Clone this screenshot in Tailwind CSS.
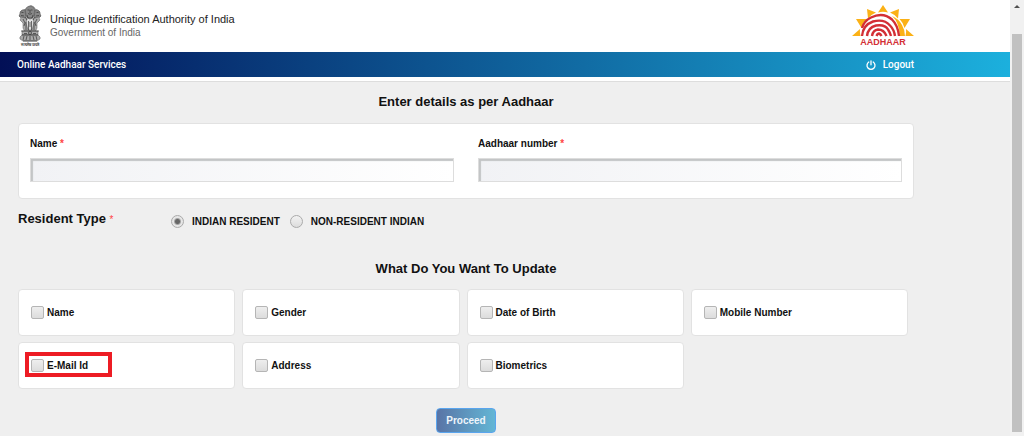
<!DOCTYPE html>
<html lang="en">
<head>
    <meta charset="UTF-8">
    <meta name="viewport" content="width=device-width, initial-scale=1.0">
    <title>Online Aadhaar Services</title>
    <script src="https://cdn.jsdelivr.net/npm/@tailwindcss/browser@4"></script>
</head>
<body class="flex min-h-screen bg-[#efefef] font-['Liberation_Sans',Arial,sans-serif] text-[#111]">
    <div class="flex-1">
        <!-- Header -->
        <header class="flex h-[52px] items-start justify-between bg-white pl-[18px] pr-24">
            <div class="flex gap-2">
                <svg class="mt-1 h-[43px] w-6" viewBox="0 0 24 43" role="img" aria-label="State Emblem of India">
                    <g stroke="#555" stroke-width=".5">
                        <path fill="#aaa" d="M4 6 2 8v3l-1 1 2 2-1 2 3 3v5l2 4h10l2-4v-5l3-3-1-2 2-2-1-1V8l-2-2-3-1-1-2-3-1.500-3 1.500-1 2z"/>
                        <path fill="#888" d="M8 4q4-4 8 0l1 4-1 4-2 2h-4l-2-2-1-4zM3 7l4-1 1 4-1 4-4-1-2-1 1-2zM21 7l-4-1-1 4 1 4 4-1 2-1-1-2z"/>
                        <path fill="#ddd" d="M9 14h6l1 5-2 7h-4l-2-7z"/>
                        <path fill="#aaa" d="M4 27h16v4H4z"/>
                        <path fill="#aaa" d="M4 31h16q3 2 2 4l-3 2H5l-3-2q-1-2 2-4z"/>
                    </g>
                    <g fill="none" stroke="#333" stroke-width=".7">
                        <path d="M9.500 6h2M12.500 6h2M10 9.500q2 1.500 4 0M12 6v3M3.500 8.500h2M18.500 8.500h2M3 11.500l3 .5M21 11.500l-3 .5"/>
                        <path d="M7 13l2 3M17 13l-2 3M9 11l1 3 2 1 2-1 1-3M5 15l2 4-1 3M19 15l-2 4 1 3M8 18v8M16 18v8M10.500 17v9M13.500 17v9M12 18v5"/>
                        <path d="M3 27h18M4 31h16M5 37h14"/>
                        <circle cx="12" cy="29" r="1.500"/>
                        <path d="M6 29.500h3M15 29.500h3M6 32l-1 4M9 32l-1 4M12 32v4M15 32l1 4M18 32l1 4"/>
                    </g>
                    <text x="12" y="42" text-anchor="middle" font-size="4" font-weight="bold" fill="#333">सत्यमेव जयते</text>
                </svg>
                <div class="mt-3">
                    <p class="text-[11px] leading-[14px] text-[#222]">Unique Identification Authority of India</p>
                    <p class="text-[10px] leading-[13px] text-[#666]">Government of India</p>
                </div>
            </div>
            <svg class="mt-1 h-[43px] w-[62px]" viewBox="0 0 62 43" role="img" aria-label="Aadhaar">
                <!-- sun rays -->
                <g fill="#fbb116">
                    <path d="M31 1l5 7.500q-5-1.500-10 0z"/>
                    <path d="M15 5l9 3.500q-5 2-8 6z"/>
                    <path d="M47 5l-9 3.500q5 2 8 6z"/>
                    <path d="M4 15l10.500 0q-4 4-5 9z"/>
                    <path d="M58 15l-10.500 0q4 4 5 9z"/>
                    <path d="M0 32l8-7q-.5 3 .5 7z"/>
                    <path d="M62 32l-8-7q.5 3-.5 7z"/>
                    <path d="M48 32h5q0-6-3-11-3-6-10-9 7 6 8 20z"/>
                </g>
                <!-- fingerprint -->
                <g fill="none" stroke="#d32f36" stroke-width="2.400">
                    <path d="M10 24q2-7 9-10.500 12-6 21 2 6 6 7 16.500"/>
                    <path d="M10 32q1-11 11-14.500 11-3 17 4 4 4 5 10.500"/>
                    <path d="M15 32q1-8.500 9-10.500 9-1.500 12 4 2 3 3 6.500"/>
                    <path d="M20 32q1-6 6-6.500 6 0 8.500 6.500"/>
                    <path d="M24.500 32q1-2.500 2.500-2.500 1.500 .5 2.500 2.500"/>
                </g>
                <text x="31" y="41" text-anchor="middle" font-size="9" font-weight="bold" fill="#d32f36">AADHAAR</text>
            </svg>
        </header>

        <nav class="flex h-[25px] items-center justify-between bg-linear-to-r/srgb from-[#020f56] to-[#1cb0dd] pl-[17px] pr-24 font-[Roboto,sans-serif] text-[10px] font-medium text-white">
            <a href="#">Online Aadhaar Services</a>
            <a href="#" class="flex items-center gap-[7px]">
                <svg class="size-[10px]" viewBox="0 0 10 10" fill="none" stroke="#fff" stroke-width="1.300" stroke-linecap="round">
                    <path d="M5 .8v4M2.800 2a4 4 0 1 0 4.400 0"/>
                </svg>
                Logout
            </a>
        </nav>
        <div class="h-[5px] border-b border-[#ddd] bg-white"></div>

        <main class="pl-[18px] pr-24 pt-[10px]">
            <form>
                <h2 class="text-center text-[13px] leading-5 font-bold">Enter details as per Aadhaar</h2>
                <div class="mt-[11px] grid grid-cols-2 gap-6 rounded border border-[#e2e2e2] bg-white px-[11px] pt-3 pb-4 text-[10px] font-bold">
                    <div>
                        <label for="name" class="block leading-4">Name <span class="text-[#f44]">*</span></label>
                        <input id="name" type="text" class="mt-[6px] block h-6 w-full border border-[#ddd] bg-linear-to-r from-[#f1f2f5] to-white px-2 shadow-[inset_2px_2px_1px_#c3c5c6] outline-none">
                    </div>
                    <div>
                        <label for="aadhaar" class="block leading-4">Aadhaar number <span class="text-[#f44]">*</span></label>
                        <input id="aadhaar" type="text" class="mt-[6px] block h-6 w-full border border-[#ddd] bg-linear-to-r from-[#f1f2f5] to-white px-2 shadow-[inset_2px_2px_1px_#c3c5c6] outline-none">
                    </div>
                </div>

                <fieldset class="mt-[10px] flex items-start text-[10px] font-bold">
                    <legend class="float-left w-[153px] text-[13px] leading-5">Resident Type <span class="text-[10px] font-normal text-[#f44]">*</span></legend>
                    <label class="mt-[5px] flex items-center gap-2">
                        <input type="radio" name="resident" checked class="size-[13px] appearance-none rounded-full border border-[#aaa] bg-linear-to-b from-[#f2f2f2] to-[#dcdcdc] checked:bg-[radial-gradient(circle,#666_2px,#e6e6e6_4px)]">
                        INDIAN RESIDENT
                    </label>
                    <label class="mt-[5px] ml-[10px] flex items-center gap-2">
                        <input type="radio" name="resident" class="size-[13px] appearance-none rounded-full border border-[#aaa] bg-linear-to-b from-[#f2f2f2] to-[#dcdcdc] checked:bg-[radial-gradient(circle,#666_2px,#e6e6e6_4px)]">
                        NON-RESIDENT INDIAN
                    </label>
                </fieldset>

                <h2 class="mt-[29px] text-center text-[13px] leading-5 font-bold">What Do You Want To Update</h2>
                <div class="mt-[10px] mr-[6px] grid grid-cols-4 gap-x-[7px] gap-y-[6px] text-[10px] font-bold">
                    <div class="flex h-[47px] items-center rounded border border-[#e2e2e2] bg-white px-3">
                        <label class="flex items-center gap-[3px]"><input type="checkbox" class="size-[13px] appearance-none rounded-xs border border-[#b5b5b5] bg-linear-to-b from-[#eee] to-[#dcdcdc] checked:bg-[#555]">Name</label>
                    </div>
                    <div class="flex h-[47px] items-center rounded border border-[#e2e2e2] bg-white px-3">
                        <label class="flex items-center gap-[3px]"><input type="checkbox" class="size-[13px] appearance-none rounded-xs border border-[#b5b5b5] bg-linear-to-b from-[#eee] to-[#dcdcdc] checked:bg-[#555]">Gender</label>
                    </div>
                    <div class="flex h-[47px] items-center rounded border border-[#e2e2e2] bg-white px-3">
                        <label class="flex items-center gap-[3px]"><input type="checkbox" class="size-[13px] appearance-none rounded-xs border border-[#b5b5b5] bg-linear-to-b from-[#eee] to-[#dcdcdc] checked:bg-[#555]">Date of Birth</label>
                    </div>
                    <div class="flex h-[47px] items-center rounded border border-[#e2e2e2] bg-white px-3">
                        <label class="flex items-center gap-[3px]"><input type="checkbox" class="size-[13px] appearance-none rounded-xs border border-[#b5b5b5] bg-linear-to-b from-[#eee] to-[#dcdcdc] checked:bg-[#555]">Mobile Number</label>
                    </div>
                    <div class="relative flex h-[47px] items-center rounded border border-[#e2e2e2] bg-white px-3">
                        <label class="flex items-center gap-[3px]"><input type="checkbox" class="size-[13px] appearance-none rounded-xs border border-[#b5b5b5] bg-linear-to-b from-[#eee] to-[#dcdcdc] checked:bg-[#555]">E-Mail Id</label>
                        <!-- highlight -->
                        <div class="pointer-events-none absolute top-[9px] left-[6px] h-[25px] w-[87px] border-4 border-[#ed1c24]"></div>
                    </div>
                    <div class="flex h-[47px] items-center rounded border border-[#e2e2e2] bg-white px-3">
                        <label class="flex items-center gap-[3px]"><input type="checkbox" class="size-[13px] appearance-none rounded-xs border border-[#b5b5b5] bg-linear-to-b from-[#eee] to-[#dcdcdc] checked:bg-[#555]">Address</label>
                    </div>
                    <div class="flex h-[47px] items-center rounded border border-[#e2e2e2] bg-white px-3">
                        <label class="flex items-center gap-[3px]"><input type="checkbox" class="size-[13px] appearance-none rounded-xs border border-[#b5b5b5] bg-linear-to-b from-[#eee] to-[#dcdcdc] checked:bg-[#555]">Biometrics</label>
                    </div>
                </div>

                <div class="mt-[19px] flex justify-center">
                    <button type="button" class="h-[25px] rounded border border-[#5aa5ee] bg-linear-to-r/srgb from-[#5974a6] to-[#63b6d5] px-[9px] text-[10px] font-bold text-[#eef5fb]">Proceed</button>
                </div>
            </form>
        </main>
    </div>

    <!-- Scrollbar -->
    <div class="flex w-[14px] flex-col items-center bg-[#f1f1f1] pt-[5px] pb-1" aria-hidden="true">
        <svg class="h-[3px] w-[6px]" viewBox="0 0 6 3"><path fill="#505050" d="M3 0l3 3H0z"/></svg>
        <div class="mt-[26px] w-[10px] flex-1 bg-[#c1c1c1]"></div>
    </div>
</body>
</html>
